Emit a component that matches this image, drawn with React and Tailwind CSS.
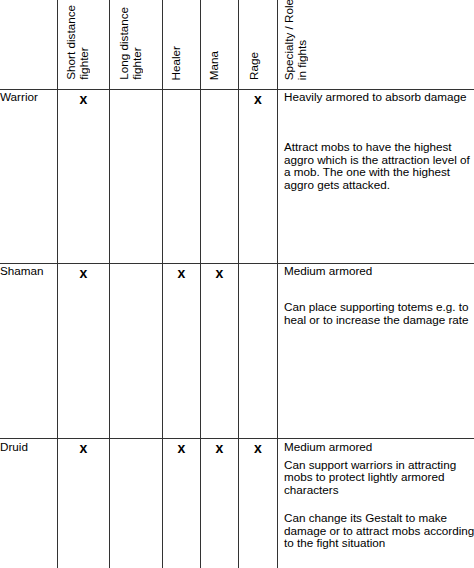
import React from "react";

const cell = "border-r border-b border-[#333]";
const rot = "[writing-mode:vertical-rl] rotate-180 whitespace-nowrap text-[11.7px] leading-[12.5px]";

function Head({ pl, children }) {
  return (
    <div className={`${cell} flex items-end pb-[9px] ${pl}`}>
      <div className={rot}>{children}</div>
    </div>
  );
}

function X() {
  return (
    <div className={`${cell} text-center font-bold text-[14px] leading-[14px] pt-[1.5px]`}>x</div>
  );
}

function E() {
  return <div className={cell}></div>;
}

function Lines({ lines, cls = "" }) {
  return (
    <div className={cls}>
      {lines.map((l) => (
        <div key={l} className="whitespace-nowrap">{l}</div>
      ))}
    </div>
  );
}

export default function App() {
  return (
    <div
      className="w-[474px] h-[568px] overflow-hidden bg-white text-[#000]"
      style={{ fontFamily: '"Liberation Sans", Arial, Helvetica, sans-serif' }}
    >
      <div className="grid grid-cols-[58px_52px_53px_38px_38px_39px_210px] grid-rows-[90px_174px_175px_220px] text-[11.7px] leading-[12.5px]">
        {/* header */}
        <div className={cell}></div>
        <Head pl="pl-[7px]">Short distance<br />fighter</Head>
        <Head pl="pl-[8px]">Long distance<br />fighter</Head>
        <Head pl="pl-[7px]">Healer</Head>
        <Head pl="pl-[7px]">Mana</Head>
        <Head pl="pl-[9px]">Rage</Head>
        <Head pl="pl-[5px]">Specialty / Role<br />in fights</Head>

        {/* Warrior */}
        <div className={`${cell} pt-[1px]`}>Warrior</div>
        <X />
        <E />
        <E />
        <E />
        <X />
        <div className={`${cell} pt-[1px] pl-[6px]`}>
          <Lines lines={["Heavily armored to absorb damage"]} />
          <Lines
            cls="mt-[37.5px]"
            lines={[
              "Attract mobs to have the highest",
              "aggro which is the attraction level of",
              "a mob. The one with the highest",
              "aggro gets attacked.",
            ]}
          />
        </div>

        {/* Shaman */}
        <div className={`${cell} pt-[1px]`}>Shaman</div>
        <X />
        <E />
        <X />
        <X />
        <E />
        <div className={`${cell} pt-[1px] pl-[6px]`}>
          <Lines lines={["Medium armored"]} />
          <Lines
            cls="mt-[23.5px]"
            lines={[
              "Can place supporting totems e.g. to",
              "heal or to increase the damage rate",
            ]}
          />
        </div>

        {/* Druid */}
        <div className={`${cell} pt-[2px]`}>Druid</div>
        <X />
        <E />
        <X />
        <X />
        <X />
        <div className={`${cell} pt-[2px] pl-[6px]`}>
          <Lines lines={["Medium armored"]} />
          <Lines
            cls="mt-[5px]"
            lines={[
              "Can support warriors in attracting",
              "mobs to protect lightly armored",
              "characters",
            ]}
          />
          <Lines
            cls="mt-[16px]"
            lines={[
              "Can change its Gestalt to make",
              "damage or to attract mobs according",
              "to the fight situation",
            ]}
          />
        </div>
      </div>
    </div>
  );
}
